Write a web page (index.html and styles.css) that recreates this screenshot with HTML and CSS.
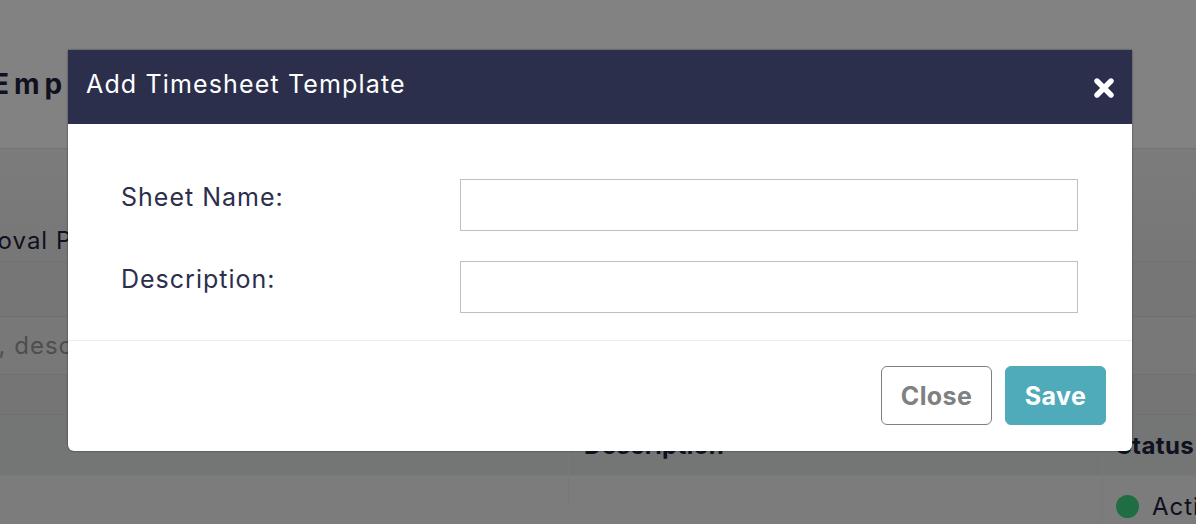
FILE: index.html
```html
<!DOCTYPE html>
<html lang="en">
<head>
  <meta charset="UTF-8" />
  <meta name="viewport" content="width=device-width, initial-scale=1.0"/>
  <title>Add Timesheet Template</title>
  <link rel="stylesheet" href="styles.css">
</head>
<body>

<div class="page">
  <div class="page-title"><h2>Employee Timesheet Templates</h2></div>
  <div class="tabs"><span>Approval Process</span></div>
  <div class="spacer"></div>
  <div class="search"><span>Search by name, description</span></div>
  <div class="gap"></div>
  <div class="table-row table-head">
    <div class="col-name"></div>
    <div class="col-desc">Description</div>
    <div class="col-status">Status</div>
  </div>
  <div class="table-row">
    <div class="col-name"></div>
    <div class="col-desc"></div>
    <div class="col-status"><i class="dot"></i>Active</div>
  </div>
</div>

<div class="backdrop"></div>

<div class="modal">
  <div class="modal-header">
    <h3>Add Timesheet Template</h3>
    <svg class="close-icon" viewBox="0 0 20 20" width="20" height="20">
      <path d="M3 3L17 17M17 3L3 17" stroke="#fff" stroke-width="5.4" stroke-linecap="round"/>
    </svg>
  </div>
  <div class="modal-body">
    <div class="field">
      <label>Sheet Name:</label>
      <input type="text" />
    </div>
    <div class="field">
      <label>Description:</label>
      <input type="text" />
    </div>
  </div>
  <div class="modal-footer">
    <button class="btn btn-close">Close</button>
    <button class="btn btn-save">Save</button>
  </div>
</div>

</body>
</html>
```

FILE: styles.css
```css
html, body {
  margin: 0;
  height: 100%;
  overflow: hidden;
}
body {
  font-family: Inter, "Open Sans", sans-serif;
  color: #1f2340;
  background: #fff;
}
.page {
  height: 524px;
  overflow: hidden;
}
.page-title {
  height: 148px;
  border-bottom: 1px solid #e2e2e2;
  background: #fff;
  display: flex;
  align-items: center;
}
.page-title h2 {
  margin: 19px 0 0 -8px;
  font-size: 28px;
  font-weight: 700;
  letter-spacing: 5px;
  white-space: nowrap;
}
.tabs {
  height: 112px;
  background: linear-gradient(#f3f3f3, #e9e9ea);
  border-bottom: 1px solid #e0e0e0;
  display: flex;
  align-items: flex-end;
  font-size: 24px;
  letter-spacing: 1px;
  white-space: nowrap;
}
.tabs span {
  margin: 0 0 6px -61px;
}
.spacer {
  height: 54px;
  background: #e7e7e8;
  border-bottom: 1px solid #dcdcdc;
}
.search {
  height: 57px;
  background: #ebebeb;
  border-bottom: 1px solid #dadada;
  color: #999;
  font-size: 24px;
  letter-spacing: 1px;
  display: flex;
  align-items: center;
  white-space: nowrap;
}
.search span {
  margin-left: -199px;
}
.gap {
  height: 39px;
  background: #e5e6e7;
  border-bottom: 1px solid #dcdcdc;
}
.table-row {
  display: flex;
  height: 30px;
}
.table-head {
  height: 60px;
  background: #e3e7e5;
  border-bottom: 1px solid #eeeeee;
  font-weight: 700;
  font-size: 24px;
  letter-spacing: 0.4px;
}
.table-row:last-child {
  background: #f3f3f3;
  height: 49px;
}
.col-name {
  width: 568px;
  flex: none;
  border-right: 1px solid #ebebeb;
}
.col-desc {
  width: 518px;
  flex: none;
  padding-left: 15px;
  border-right: 1px solid #ebebeb;
  display: flex;
  align-items: center;
}
.col-status {
  flex: 1;
  padding-left: 13px;
  display: flex;
  align-items: center;
  white-space: nowrap;
}
.table-row:last-child .col-name {
  height: 29px;
}
.table-row:last-child .col-status {
  font-size: 24px;
  letter-spacing: 1px;
  padding-top: 12px;
}
.dot {
  width: 23px;
  height: 23px;
  border-radius: 50%;
  background: #3dd681;
  margin-right: 13px;
  flex: none;
}
.backdrop {
  position: absolute;
  inset: 0;
  background: rgba(0, 0, 0, 0.49);
}
.modal {
  position: absolute;
  left: 68px;
  top: 50px;
  width: 1064px;
  height: 401px;
  background: #fff;
  border-radius: 0 0 6px 6px;
  box-shadow: 0 0 2px rgba(0, 0, 0, 0.6);
  display: flex;
  flex-direction: column;
  overflow: hidden;
}
.modal-header {
  height: 74px;
  flex: none;
  background: #2b2f4c;
  color: #fff;
  display: flex;
  align-items: center;
  justify-content: space-between;
  padding: 0 18px;
}
.modal-header h3 {
  margin: -6px 0 0 0;
  font-size: 25px;
  font-weight: 400;
  letter-spacing: 1.15px;
}
.close-icon {
  margin: 1px 0 0 0;
}
.modal-body {
  height: 217px;
  flex: none;
  padding: 55px 54px 0 53px;
  box-sizing: border-box;
  display: flex;
  flex-direction: column;
  gap: 30px;
  border-bottom: 1px solid #e9ecef;
}
.field {
  display: flex;
  height: 52px;
}
.field label {
  width: 339px;
  flex: none;
  font-size: 25px;
  letter-spacing: 1px;
  color: #2b2f4c;
  line-height: 36px;
}
.field input {
  flex: 1;
  height: 52px;
  box-sizing: border-box;
  border: 1px solid #bfbfbf;
  background: #fff;
  outline: none;
}
.modal-footer {
  flex: 1;
  display: flex;
  justify-content: flex-end;
  align-items: flex-start;
  gap: 13px;
  padding: 25px 26px 0 0;
}
.btn {
  height: 59px;
  border-radius: 6px;
  font-family: inherit;
  font-size: 25px;
  font-weight: 700;
  letter-spacing: 0.4px;
}
.btn-close {
  width: 111px;
  background: #fff;
  border: 1px solid #808080;
  color: #808080;
}
.btn-save {
  width: 101px;
  background: #4faab9;
  border: 1px solid #4faab9;
  color: #fff;
}
```
